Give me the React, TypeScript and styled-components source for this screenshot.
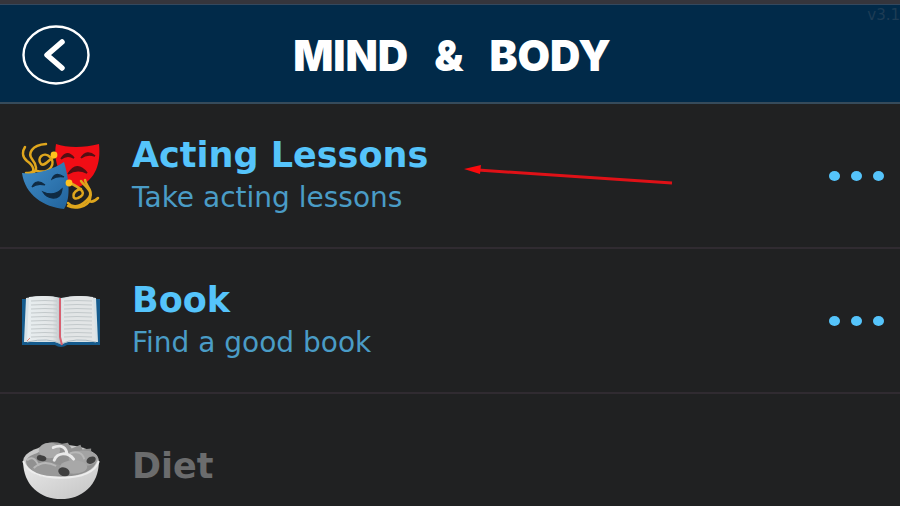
import React from "react";
import styled, { createGlobalStyle } from "styled-components";

const GlobalStyle = createGlobalStyle`
  * { box-sizing: border-box; }
  body { margin: 0; background: #202122; overflow: hidden; }
`;

const Screen = styled.main`
  height: 100vh;
  overflow: hidden;
  background: #202122;
  font-family: "DejaVu Sans", "Open Sans", sans-serif;
`;

const Header = styled.header`
  position: relative;
  display: grid;
  grid-template-columns: 68px 1fr 68px;
  align-items: center;
  height: 104px;
  padding: 4px 22px 0;
  border-top: 4px solid #35353c;
  border-bottom: 2px solid #364b5b;
  background: #012a49;
  box-shadow: inset 0 1px 0 #33485e;
`;

const BackButton = styled.button`
  display: flex;
  width: 68px;
  height: 60px;
  padding: 0;
  border: 0;
  background: none;
  cursor: pointer;
`;

const PageTitle = styled.h1`
  display: flex;
  justify-content: center;
  gap: 26px;
  margin: 0;
  padding-top: 2px;
  padding-left: 4px;
  color: #fff;
  font-family: Inter, sans-serif;
  font-size: 42px;
  font-weight: 900;
  line-height: 48px;
  white-space: pre;
`;

const Version = styled.span`
  position: absolute;
  top: 0;
  right: 0;
  color: #1d3c55;
  font-size: 15px;
  line-height: 22px;
`;

const List = styled.ul`
  margin: 0;
  padding: 0;
  list-style: none;
`;

const Row = styled.li`
  position: relative;
  display: grid;
  grid-template-columns: 80px 1fr 60px;
  align-items: center;
  column-gap: 31px;
  height: 145px;
  padding: 0 14px 0 21px;
  border-bottom: 2px solid #302b31;
`;

const RowText = styled.div`
  display: flex;
  flex-direction: column;
`;

const RowTitle = styled.h2<{ $muted?: boolean }>`
  margin: 0;
  color: ${(p) => (p.$muted ? "#6b6c6d" : "#55c4fb")};
  font-size: 35px;
  font-weight: 700;
  line-height: 44px;
`;

const RowSubtitle = styled.p`
  margin: 0;
  color: #4a9cc6;
  font-size: 28px;
  line-height: 42px;
`;

const MoreButton = styled.button`
  display: flex;
  justify-content: center;
  gap: 11px;
  padding: 10px 0;
  border: 0;
  background: none;
  cursor: pointer;
`;

const Dot = styled.span`
  width: 11px;
  height: 10px;
  border-radius: 50%;
  background: #55c4fb;
`;

const Pointer = styled.svg`
  position: absolute;
  top: 58px;
  left: 462px;
`;

const MasksIcon = () => (
  <svg width="80" height="72" viewBox="0 0 80 72" fill="none" aria-hidden="true">
    <defs>
      <linearGradient id="maskBlue" x1="0" y1="0" x2="1" y2="1">
        <stop offset="0" stopColor="#408dc8" />
        <stop offset="1" stopColor="#21639c" />
      </linearGradient>
    </defs>
    <path d="M35 4C46 8 63 8 78 4C80 23 75 39 58 47C44 44 31 27 35 4Z" fill="#f10d15" />
    <path d="M40 19Q46 9 53 18Q46 14 40 19ZM60 18Q66 9 74 16Q66 13 60 18ZM47 34Q56 20 66 33Q56 28 47 34Z" fill="#531014" stroke="#531014" strokeWidth="1.5" />
    <g stroke="#dfa61d" strokeWidth="2.5" strokeLinecap="round">
      <path d="M5 33C17 34 12 25 6 21C0 16 2 10 4 7" />
      <path d="M10 33C18 32 15 24 11 19C7 14 10 5 25 4" />
      <path d="M16 31C30 34 35 23 29 17C23 11 15 18 20 24C24 27 28 19 34 16" />
      <path d="M49 43C62 49 66 54 57 58C51 61 50 51 60 49" />
      <path d="M60 41C65 48 75 52 65 61C58 68 50 67 47 63" />
      <path d="M64 40C65 47 72 49 69 59C66 68 53 69 47 66M67 60Q71 64 77 58" />
    </g>
    <path d="M1 33C14 35 31 30 43 22C47 35 51 57 43 69C23 67 4 55 1 33Z" fill="url(#maskBlue)" />
    <path d="M11 47Q15 38 24 45Q16 43 11 47ZM31 39Q34 31 43 37Q36 36 31 39ZM22 52Q33 57 41 49Q40 59 31 58Q25 57 22 52Z" fill="#102b43" stroke="#102b43" strokeWidth="1.2" />
    <circle cx="33" cy="15" r="3.4" fill="#ffc21d" />
    <circle cx="48" cy="43" r="3.4" fill="#ffc21d" />
  </svg>
);

const BookIcon = () => (
  <svg width="80" height="52" viewBox="0 0 80 52" fill="none" aria-hidden="true">
    <defs>
      <linearGradient id="pageShade" x1="0" x2="1">
        <stop offset="0" stopColor="#e8eef0" />
        <stop offset=".75" stopColor="#e2e5e6" />
        <stop offset="1" stopColor="#bdc5c9" />
      </linearGradient>
    </defs>
    <path d="M1 4H79V50H46Q43 52 40 52Q37 52 34 50H1Z" fill="#155b8d" />
    <path d="M5 3Q25-1 40 3Q58-1 75 3L77 47H3Z" fill="#d7e2e7" />
    <path d="M8 2Q29-1 40 4V49Q27 43 6 47Z" fill="url(#pageShade)" />
    <path d="M72 2Q52-1 41 4V49Q54 43 75 47Z" fill="#e2e5e6" />
    <path d="M6 47Q28 42 40 49Q54 42 75 47" stroke="#aebcc4" />
    <g stroke="#c3c9cb" strokeWidth="1">
      {[6, 10, 14, 18, 22, 26, 30, 34, 38, 42].map((y) => (
        <path key={y} d={`M10 ${y}Q25 ${y - 1} 36 ${y}M43 ${y}Q55 ${y - 1} 71 ${y}`} />
      ))}
    </g>
    <path d="M39 3V42L41 50" stroke="#d86170" strokeWidth="2" />
    <path d="M6 46L9 43" stroke="#e28479" />
  </svg>
);

const BowlIcon = () => (
  <svg width="80" height="68" viewBox="-1 -8 82 70" fill="none" aria-hidden="true">
    <defs>
      <linearGradient id="bowlShade" x1="0" y1="0" x2="1" y2="1">
        <stop offset="0" stopColor="#e9e9e9" />
        <stop offset="1" stopColor="#c4c4c4" />
      </linearGradient>
    </defs>
    <path d="M1 22C1 47 19 61 40 61S79 47 79 22Z" fill="url(#bowlShade)" />
    <ellipse cx="40" cy="22" rx="39" ry="17" fill="#c8c8c8" />
    <path d="M4 22C8 13 17 16 19 10C22 3 31 1 41 4L47 3L51 9L60 5L62 10L71 9L71 16L77 20C76 31 61 38 40 38S4 31 4 22Z" fill="#919191" />
    <ellipse cx="28" cy="11" rx="11" ry="8" fill="#aaa" />
    <ellipse cx="63" cy="19" rx="15" ry="8" fill="#a3a3a3" />
    <ellipse cx="27" cy="31" rx="17" ry="7" fill="#999" />
    <ellipse cx="53" cy="28" rx="14" ry="7" fill="#a8a8a8" />
    <path d="M5 21Q12 15 17 27M12 29Q22 20 35 27M49 14Q61 10 64 20" stroke="#b8b8b8" strokeWidth="2" />
    <ellipse cx="20" cy="19" rx="5" ry="3" transform="rotate(12 20 19)" fill="#404040" />
    <ellipse cx="43" cy="33" rx="6" ry="4.5" transform="rotate(20 43 33)" fill="#404040" />
    <ellipse cx="71" cy="21" rx="5" ry="3.5" transform="rotate(-25 71 21)" fill="#444" />
    <path d="M32 8C41 4 46 9 46 15M33 21C36 13 47 12 53 20" stroke="#e9e9e9" strokeWidth="3" strokeLinecap="round" />
    <path d="M1 22Q7 39 40 39T79 22" stroke="#ededed" strokeWidth="2" />
  </svg>
);

interface Activity {
  title: string;
  subtitle?: string;
  icon: React.ReactNode;
  highlighted?: boolean;
}

const activities: Activity[] = [
  { title: "Acting Lessons", subtitle: "Take acting lessons", icon: <MasksIcon />, highlighted: true },
  { title: "Book", subtitle: "Find a good book", icon: <BookIcon /> },
  { title: "Diet", icon: <BowlIcon /> },
];

export default function App() {
  return (
    <Screen>
      <GlobalStyle />
      <Header>
        <BackButton aria-label="Back">
          <svg width="68" height="60" viewBox="0 0 68 60" fill="none" stroke="#fff">
            <ellipse cx="34" cy="30" rx="32.5" ry="28.5" strokeWidth="2.4" />
            <path d="M40 17L25 30L40 43" strokeWidth="5.5" strokeLinecap="round" strokeLinejoin="round" />
          </svg>
        </BackButton>
        <PageTitle>
          <span>MIND</span> <span>&amp;</span> <span>BODY</span>
        </PageTitle>
        <Version>v3.1</Version>
      </Header>
      <List>
        {activities.map((a) => (
          <Row key={a.title}>
            {a.icon}
            <RowText>
              <RowTitle $muted={!a.subtitle}>{a.title}</RowTitle>
              {a.subtitle && <RowSubtitle>{a.subtitle}</RowSubtitle>}
            </RowText>
            {a.subtitle && (
              <MoreButton aria-label={`More options for ${a.title}`}>
                <Dot />
                <Dot />
                <Dot />
              </MoreButton>
            )}
            {a.highlighted && (
              <Pointer width="212" height="26" viewBox="0 0 212 26" aria-hidden="true">
                <path d="M16 8L210 21" stroke="#df1117" strokeWidth="3" />
                <path d="M2 7L19 3L18 12Z" fill="#fb0a0d" />
              </Pointer>
            )}
          </Row>
        ))}
      </List>
    </Screen>
  );
}
